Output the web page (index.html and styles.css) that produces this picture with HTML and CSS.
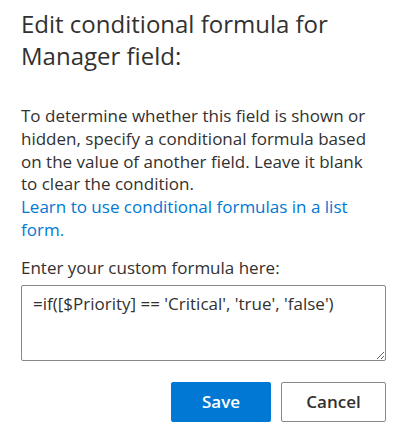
FILE: index.html
```html
<!DOCTYPE html>
<html>
<head>
<meta charset="utf-8">
<link rel="stylesheet" href="styles.css">
</head>
<body>
<div class="dialog">
  <h1 class="title">Edit conditional formula for Manager field:</h1>
  <p class="desc">To determine whether this field is shown or hidden, specify a conditional formula based on the value of another field. Leave it blank to clear the condition. <a class="link" href="#">Learn to use conditional formulas in a list form.</a></p>
  <label class="label" for="f">Enter your custom formula here:</label>
  <textarea id="f" class="formula">=if([$Priority] == 'Critical', 'true', 'false')</textarea>
  <div class="actions">
    <button class="btn primary">Save</button>
    <button class="btn">Cancel</button>
  </div>
</div>
</body>
</html>
```

FILE: styles.css
```css
html, body {
  margin: 0;
  padding: 0;
  background: #ffffff;
}
body {
  font-family: "Open Sans", "Noto Sans", sans-serif;
  color: #323130;
}
.dialog {
  padding: 8px 25px 0 21px;
  display: flex;
  flex-direction: column;
}
.title {
  margin: 0;
  font-size: 24px;
  line-height: 32px;
  font-weight: 400;
}
.desc {
  margin: 33px 15px 0 0;
  font-size: 17px;
  line-height: 22.8px;
}
.link {
  color: #0078d4;
  text-decoration: none;
  display: block;
}
.label {
  margin-top: 15px;
  font-size: 17px;
  line-height: 22.8px;
  font-weight: 500;
}
.formula {
  margin-top: 5px;
  box-sizing: border-box;
  width: 365px;
  height: 76px;
  border: 1px solid #8a8886;
  border-radius: 2px;
  padding: 7px 11px;
  font-family: inherit;
  font-size: 17px;
  line-height: 22px;
  color: #323130;
  resize: both;
  outline: none;
}
.actions {
  margin-top: 21px;
  display: flex;
  justify-content: flex-end;
  gap: 10px;
}
.btn {
  box-sizing: border-box;
  height: 40px;
  min-width: 105px;
  padding: 0 20px;
  border: 1px solid #8a8886;
  border-radius: 2px;
  background: #ffffff;
  color: #323130;
  font-family: inherit;
  font-size: 17px;
  font-weight: 600;
}
.btn.primary {
  min-width: 100px;
  background: #0078d4;
  border-color: #0078d4;
  color: #ffffff;
}
```
